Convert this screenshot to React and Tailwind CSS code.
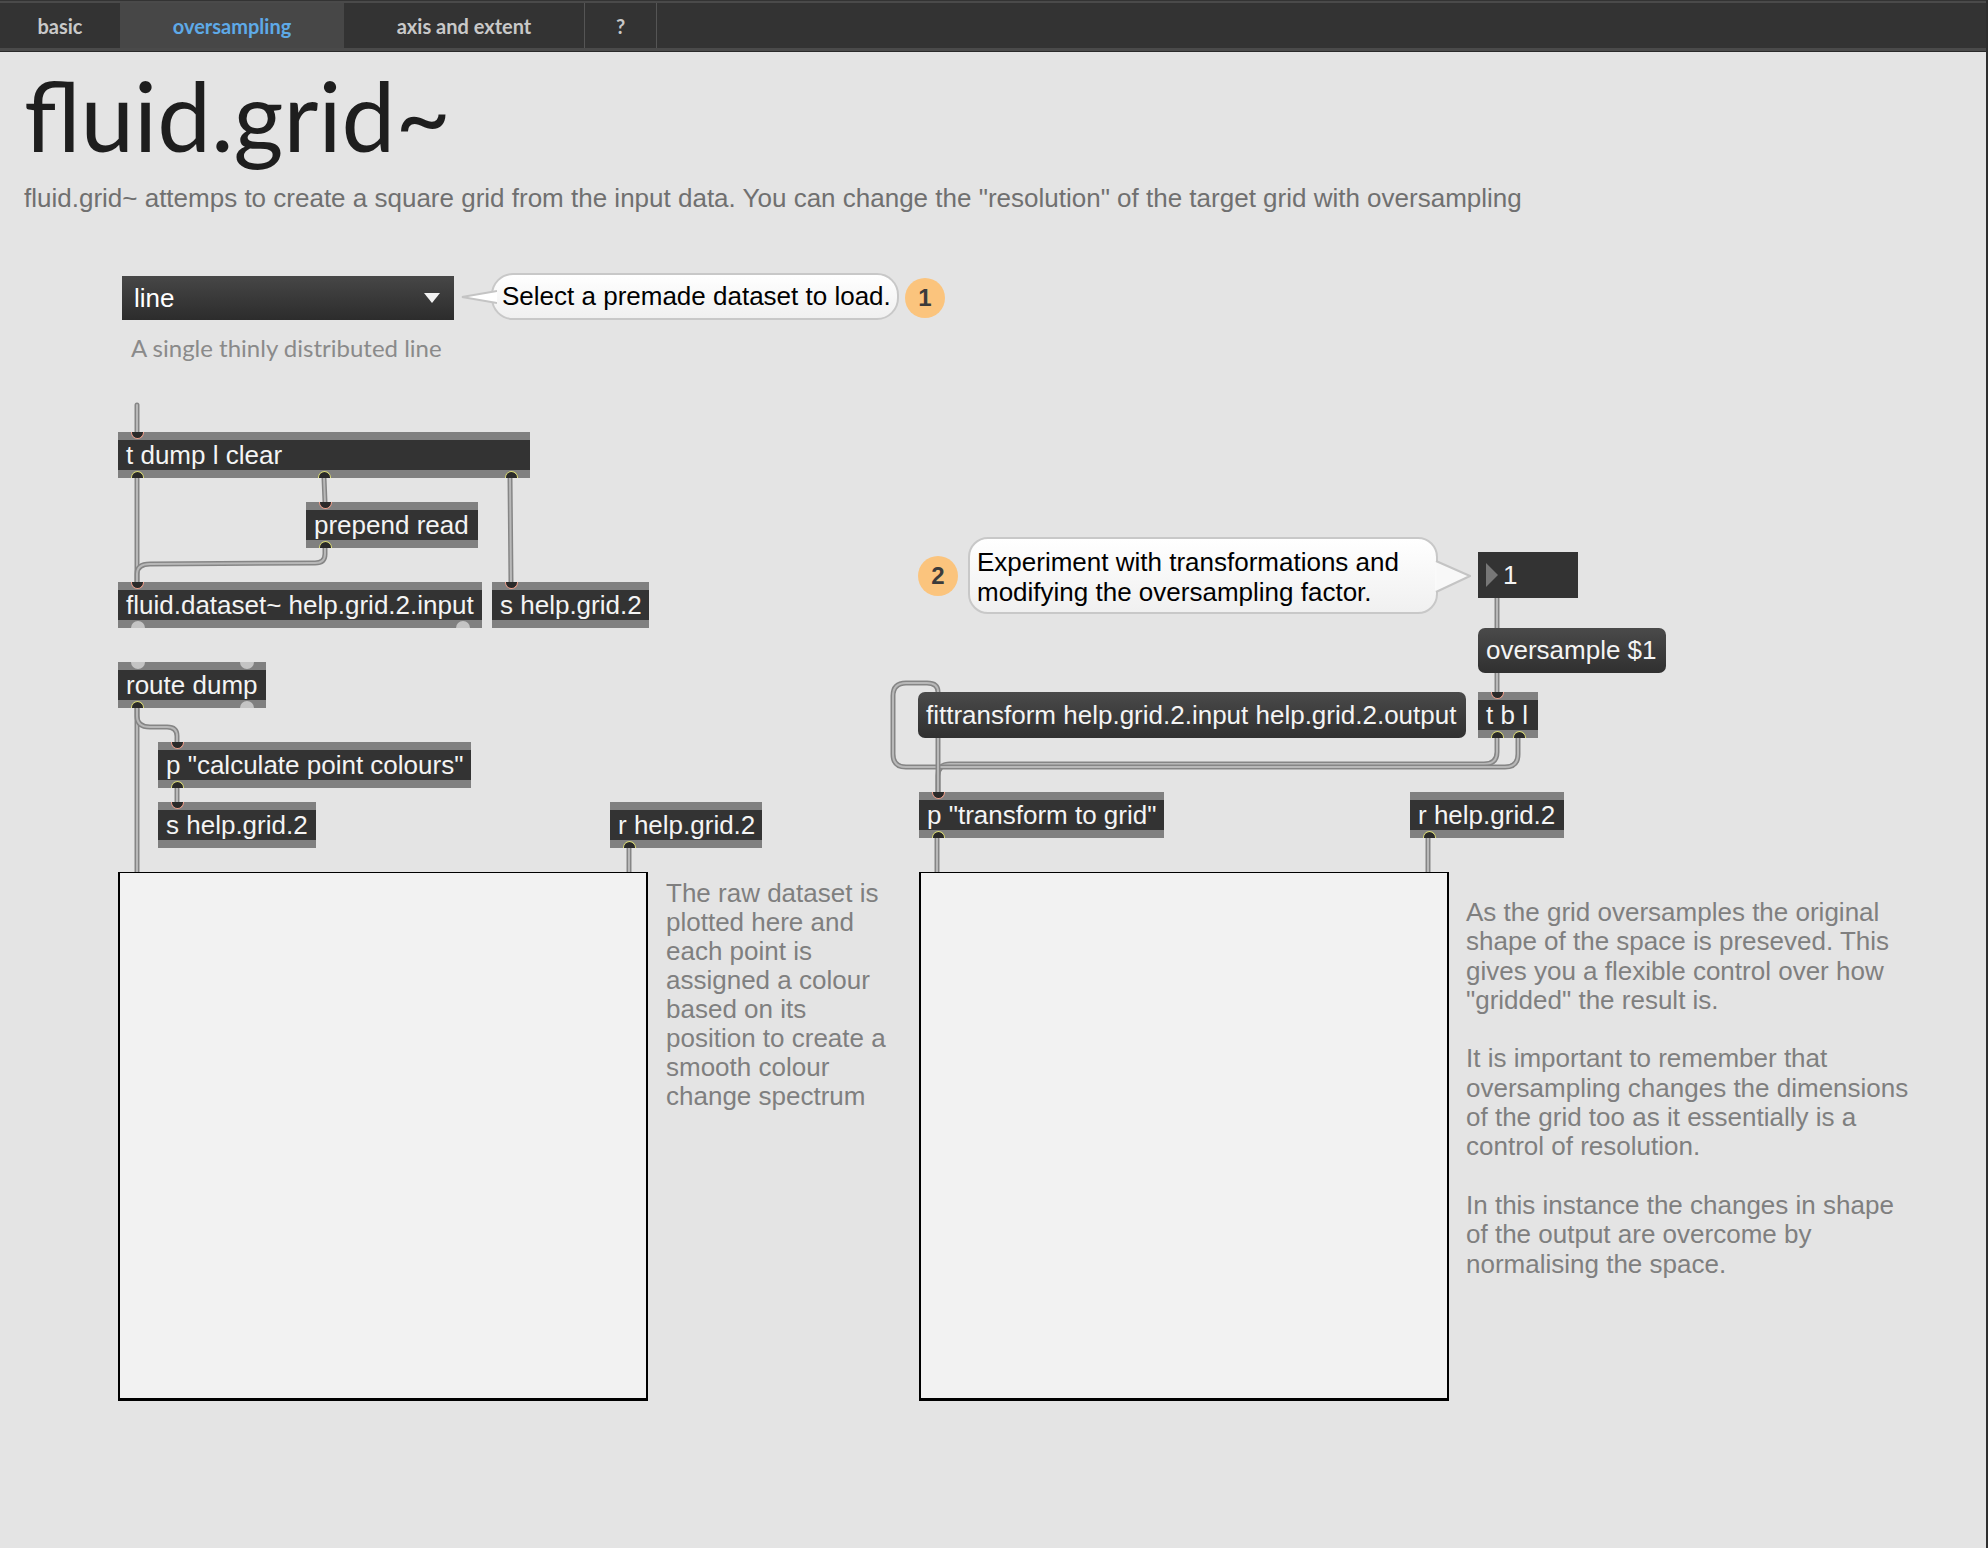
import React from "react";

// Max patcher objects on the canvas (place on the canvas is the content)
const objects = [
  { pos: "left-[118px] top-[219px] w-[412px]", text: "t dump l clear", ins: ["in"], outs: ["out", "out", "out"] },
  { pos: "left-[306px] top-[289px] w-[172px]", text: "prepend read", ins: ["in"], outs: ["out"] },
  { pos: "left-[118px] top-[369px] w-[364px]", text: "fluid.dataset~ help.grid.2.input", ins: ["in"], outs: ["off", "off"] },
  { pos: "left-[492px] top-[369px] w-[157px]", text: "s help.grid.2", ins: ["in"], outs: [] },
  { pos: "left-[118px] top-[449px] w-[148px]", text: "route dump", ins: ["off", "off"], outs: ["out", "off"] },
  { pos: "left-[158px] top-[529px] w-[313px]", text: 'p "calculate point colours"', ins: ["in"], outs: ["out"] },
  { pos: "left-[158px] top-[589px] w-[158px]", text: "s help.grid.2", ins: ["in"], outs: [] },
  { pos: "left-[610px] top-[589px] w-[152px]", text: "r help.grid.2", ins: [], outs: ["out"] },
  { pos: "left-[919px] top-[579px] w-[245px]", text: 'p "transform to grid"', ins: ["in"], outs: ["out"] },
  { pos: "left-[1410px] top-[579px] w-[154px]", text: "r help.grid.2", ins: [], outs: ["out"] },
  { pos: "left-[1478px] top-[479px] w-[60px]", text: "t b l", ins: ["in"], outs: ["out", "out"] },
];

// patch cords, in page coordinates (canvas starts at y = 213)
const cords = [
  "M137 405 L137 432",
  "M137 478 L137 582",
  "M324 478 L325 502",
  "M510 478 L511 582",
  "M325 548 L325 554 Q325 563 315 563 L150 564 Q137 564 137 574 L137 582",
  "M137 708 L137 872",
  "M137 708 L137 716 Q137 727 150 727 L167 727 Q177 727 177 736 L177 742",
  "M177 788 L177 802",
  "M629 848 L629 872",
  "M1497 598 L1497 628",
  "M1497 673 L1497 692",
  "M1497 738 L1497 752 Q1497 764 1484 764 L950 764 Q938 764 938 776 L938 792",
  "M1518 738 L1518 754 Q1518 767 1505 767 L906 767 Q893 767 893 754 L893 696 Q893 683 906 683 L927 683 Q938 683 938 692",
  "M938 738 L938 792",
  "M937 838 L937 872",
  "M1428 838 L1428 872",
];

function Port({ kind, top }) {
  if (kind === "off") {
    return <div className={`h-[7px] w-[14px] bg-[#c4c4c4] ${top ? "rounded-b-full" : "rounded-t-full"}`} />;
  }
  if (kind === "in") {
    return <div className="h-[7px] w-[13px] rounded-b-full border-[1.5px] border-t-0 border-[#f3a28d] bg-[#2a2a2a]" />;
  }
  return <div className="h-[7px] w-[13px] rounded-t-full border-[1.5px] border-b-0 border-[#dcdc78] bg-[#2a2a2a]" />;
}

function ObjBox({ pos, text, ins, outs }) {
  return (
    <div className={`absolute flex h-[46px] flex-col bg-[#333333] ${pos}`}>
      <div className="h-2 bg-[#808080]" />
      <div className="h-[30px] whitespace-nowrap px-2 text-[26px] leading-[30px] text-[#f4f4f4]">{text}</div>
      <div className="h-2 bg-[#808080]" />
      <div className="absolute inset-x-0 top-0 flex items-start justify-between px-[12.5px]">
        {ins.map((k, i) => (
          <Port key={i} kind={k} top />
        ))}
      </div>
      <div className="absolute inset-x-0 bottom-0 flex items-end justify-between px-[12.5px]">
        {outs.map((k, i) => (
          <Port key={i} kind={k} />
        ))}
      </div>
    </div>
  );
}

function MsgBox({ pos, text }) {
  return (
    <div
      className={`absolute flex items-center whitespace-nowrap rounded-[7px] bg-linear-to-b from-[#4a4a4a] to-[#303030] px-2 text-[26px] text-[#f4f4f4] ${pos}`}
    >
      {text}
    </div>
  );
}

function Badge({ n, className = "" }) {
  return (
    <div
      className={`flex h-10 w-10 shrink-0 items-center justify-center rounded-full bg-[#fbc47d] text-[24px] font-bold text-[#3b3b3b] ${className}`}
    >
      {n}
    </div>
  );
}

function Tab({ label, active, w, sep }) {
  return (
    <div
      className={`flex h-full items-center justify-center font-[Lato,sans-serif] text-[20px] font-bold ${w} ${
        active ? "bg-[#474747] text-[#5eaae8]" : "text-[#c9c9c9]"
      } ${sep ? "border-r border-[#555555]" : ""}`}
    >
      {label}
    </div>
  );
}

export default function App() {
  return (
    <div className="h-[1548px] w-[1988px] overflow-hidden border-r-2 border-[#2e2e2e] bg-[#e4e4e4] font-['Liberation_Sans',Arial,sans-serif]">
      {/* Tabs */}
      <div className="flex h-[52px] flex-col bg-[#333333]">
        <div className="h-px" />
        <div className="h-[2px] bg-[#4a4a4a]" />
        <div className="flex h-[45px]">
          <Tab label="basic" w="w-[120px]" />
          <Tab label="oversampling" w="w-[224px]" active />
          <Tab label="axis and extent" w="w-[241px]" sep />
          <Tab label="?" w="w-[72px]" sep />
        </div>
        <div className="h-[3px] bg-[#4a4a4a]" />
        <div className="h-px bg-[#2a2a2a]" />
      </div>

      {/* Header */}
      <div className="pl-[24px]">
        <h1 className="pt-[15px] font-[Lato,sans-serif] text-[96px] leading-[96px] font-normal text-[#1e1e1e]">fluid.grid~</h1>
        <p className="mt-[20px] text-[26px] leading-[30px] text-[#707070]">
          fluid.grid~ attemps to create a square grid from the input data. You can change the "resolution" of the target grid with oversampling
        </p>
      </div>

      {/* Patcher canvas */}
      <div className="relative h-[1335px]">
        <svg className="absolute inset-0" width="1988" height="1335">
          <g transform="translate(0,-213)" fill="none" strokeLinecap="round" strokeLinejoin="round">
            {cords.map((d, i) => (
              <g key={i}>
                <path d={d} stroke="#858585" strokeWidth="5" />
                <path d={d} stroke="#b8b8b8" strokeWidth="2" />
              </g>
            ))}
          </g>
        </svg>

        {/* step 1: dataset menu with its hint */}
        <div className="absolute left-[122px] top-[60px] flex flex-col">
          <div className="flex items-start">
            <div className="mt-[3px] flex h-[44px] w-[332px] items-center justify-between bg-linear-to-b from-[#474747] to-[#2c2c2c] pl-3 pr-[14px] text-[26px] text-white">
              <span>line</span>
              <svg width="16" height="10" viewBox="0 0 16 10">
                <path d="M0 0 L16 0 L8 10 Z" fill="#f2f2f2" />
              </svg>
            </div>
            <svg className="relative z-10 -mr-[6px] ml-[6px] mt-[14px]" width="37" height="20">
              <path d="M37 4 L2 10 L37 16" fill="#ffffff" stroke="#c4c4c4" strokeWidth="2" />
            </svg>
            <div className="flex h-[47px] w-[408px] items-center whitespace-nowrap rounded-[22px] border-2 border-[#c8c8c8] bg-linear-to-b from-white to-[#f0f0f0] pl-[9px] text-[26px] text-black">
              Select a premade dataset to load.
            </div>
            <Badge n="1" className="ml-[6px] mt-[5px]" />
          </div>
          <div className="mt-[13px] whitespace-nowrap pl-[9px] font-[Lato,sans-serif] text-[24px] leading-[30px] text-[#8a8a8a]">
            A single thinly distributed line
          </div>
        </div>

        {/* step 2: hint and oversampling factor */}
        <div className="absolute left-[918px] top-[324px] flex items-start">
          <Badge n="2" className="mt-[19px]" />
          <div className="ml-[10px] h-[77px] w-[470px] whitespace-nowrap rounded-[20px] border-2 border-[#c8c8c8] bg-linear-to-b from-white to-[#f0f0f0] pl-[7px] pt-[8px] text-[26px] leading-[30px] text-black">
            Experiment with transformations and
            <br />
            modifying the oversampling factor.
          </div>
          <svg className="-ml-[3px] mt-[22px]" width="36" height="36">
            <path d="M1 2 L35 17 L1 33" fill="#f8f8f8" stroke="#c4c4c4" strokeWidth="2" />
            <path d="M0 4 L0 31" stroke="#fafafa" strokeWidth="3" />
          </svg>
          <div className="ml-[7px] mt-[15px] flex h-[46px] w-[100px] items-center bg-[#333333] pl-2 text-[26px] text-[#f4f4f4]">
            <svg width="12" height="24" viewBox="0 0 12 24" className="mr-[5px]">
              <path d="M0 0 L12 12 L0 24 Z" fill="#777777" />
            </svg>
            1
          </div>
        </div>

        <MsgBox pos="left-[1478px] top-[415px] h-[45px] w-[188px]" text="oversample $1" />
        <MsgBox pos="left-[918px] top-[479px] h-[46px] w-[548px]" text="fittransform help.grid.2.input help.grid.2.output" />

        {objects.map((o, i) => (
          <ObjBox key={i} {...o} />
        ))}

        {/* plots */}
        <div className="absolute left-[118px] top-[659px] h-[529px] w-[530px] border-2 border-t border-b-[3px] border-black bg-[#f2f2f2]" />
        <div className="absolute left-[919px] top-[659px] h-[529px] w-[530px] border-2 border-t border-b-[3px] border-black bg-[#f2f2f2]" />

        {/* comments */}
        <div className="absolute left-[666px] top-[666px] whitespace-nowrap text-[26px] leading-[29px] text-[#7f7f7f]">
          The raw dataset is
          <br />
          plotted here and
          <br />
          each point is
          <br />
          assigned a colour
          <br />
          based on its
          <br />
          position to create a
          <br />
          smooth colour
          <br />
          change spectrum
        </div>
        <div className="absolute left-[1466px] top-[685px] whitespace-nowrap text-[26px] leading-[29.3px] text-[#7f7f7f]">
          As the grid oversamples the original
          <br />
          shape of the space is preseved. This
          <br />
          gives you a flexible control over how
          <br />
          "gridded" the result is.
          <br />
          <br />
          It is important to remember that
          <br />
          oversampling changes the dimensions
          <br />
          of the grid too as it essentially is a
          <br />
          control of resolution.
          <br />
          <br />
          In this instance the changes in shape
          <br />
          of the output are overcome by
          <br />
          normalising the space.
        </div>
      </div>
    </div>
  );
}
